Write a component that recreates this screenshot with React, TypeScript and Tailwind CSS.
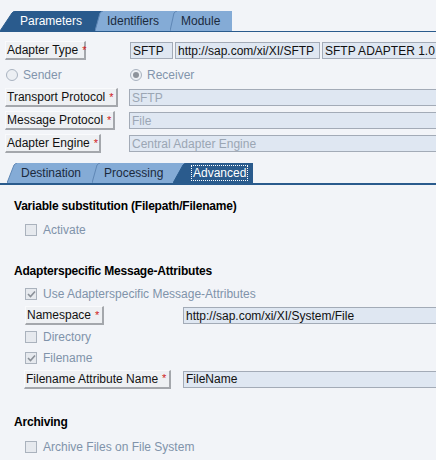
import React from "react";

const DARK = "#2a5b8d";
const LIGHT = "#84abd6";
const PAGE = "#f2f4f8";

interface TabDef {
  label: string;
  slant: number;
  width: number;
  selected?: boolean;
  overlap?: number;
}

function Slant({ w, h, fill, prev, edge }: { w: number; h: number; fill: string; prev: string; edge: string }) {
  return (
    <svg width={w} height={h} viewBox={`0 0 ${w} ${h}`} className="block shrink-0">
      <rect x="0" y="0" width={w} height={h} fill={prev} />
      <path d={`M0 ${h} L${w - 3} 2 Q${w - 1} 0 ${w} 0 L${w} ${h} Z`} fill={fill} />
      <path d={`M0 ${h} L${w - 3} 2 Q${w - 1} 0 ${w} 0`} fill="none" stroke={edge} strokeWidth="1" />
    </svg>
  );
}

function TabStrip({ tabs, lead = 0 }: { tabs: TabDef[]; lead?: number }) {
  return (
    <div>
      <div className="flex h-[20px] items-stretch" style={{ paddingLeft: lead }}>
        {tabs.map((t, i) => {
          const fill = t.selected ? DARK : LIGHT;
          const prevTab = tabs[i - 1];
          const prev = i === 0 ? PAGE : prevTab.selected ? DARK : LIGHT;
          return (
            <div
              key={t.label}
              className="flex items-stretch"
              style={{ marginLeft: t.overlap ? -t.overlap : 0 }}
            >
              <Slant w={t.slant} h={20} fill={fill} prev={prev} edge={t.selected ? DARK : "#5f87b5"} />
              <div
                className={
                  t.selected
                    ? "flex items-center pl-[5px] text-white bg-[#2a5b8d]"
                    : "flex items-center pl-[4px] text-[#1b2a3d] bg-[#84abd6]"
                }
                style={{ width: t.width }}
              >
                {t.selected && t.label === "Advanced" ? (
                  <span className="border border-dotted border-white px-[1px] leading-[14px]">{t.label}</span>
                ) : (
                  <span>{t.label}</span>
                )}
              </div>
            </div>
          );
        })}
      </div>
      <div className="h-[1px] bg-[#2a5b8d]" />
    </div>
  );
}

function Label({ text, width }: { text: string; width: number }) {
  return (
    <div
      className="flex h-[19px] shrink-0 items-center whitespace-nowrap border-t border-l border-[#f9fafc] border-r-2 border-b-2 border-r-[#a4a7ac] border-b-[#a4a7ac] bg-[#eef0f3] pl-[1px] text-[#111]"
      style={{ width }}
    >
      {text}
      <span className="ml-[4px] text-[11px] text-[#d01818]">*</span>
    </div>
  );
}

function Field({ value, disabled, width }: { value: string; disabled?: boolean; width?: number }) {
  return (
    <div
      className={
        "flex h-[17px] items-center whitespace-nowrap border border-[#a3abb7] bg-[#dfe7f2] pl-[2px] " +
        (disabled ? "text-[#9ba6b4]" : "text-[#111]") +
        (width ? " shrink-0" : " flex-1")
      }
      style={width ? { width } : undefined}
    >
      {value}
    </div>
  );
}

function Radio({ checked, label }: { checked?: boolean; label: string }) {
  return (
    <div className="flex items-center gap-[5px] text-[#8295ac]">
      <span className="flex h-[12px] w-[12px] items-center justify-center rounded-full border border-[#a9b3c0] bg-[#eceff3]">
        {checked && <span className="h-[6px] w-[6px] rounded-full bg-[#8d939b]" />}
      </span>
      {label}
    </div>
  );
}

function Check({ checked, label }: { checked?: boolean; label: string }) {
  return (
    <div className="flex h-[20px] items-center gap-[6px] pl-[25px] text-[#8093aa]">
      <span className="flex h-[12px] w-[12px] items-center justify-center border border-[#aab2bd] bg-[#e6e9ee]">
        {checked && (
          <svg width="9" height="8" viewBox="0 0 9 8">
            <path d="M1 4 L3.5 6.5 L8 1.5" fill="none" stroke="#8a9098" strokeWidth="1.6" />
          </svg>
        )}
      </span>
      {label}
    </div>
  );
}

function Heading({ text }: { text: string }) {
  return <div className="h-[16px] pl-[14px] font-bold leading-[16px] text-black tracking-[-0.2px]">{text}</div>;
}

export default function App() {
  return (
    <div
      className="h-[460px] w-[436px] overflow-hidden bg-[#f2f4f8] text-[12px]"
      style={{ fontFamily: '"Liberation Sans", Arial, sans-serif' }}
    >
      <div className="w-[460px]">
        <div className="pt-[11px]">
          <TabStrip
            tabs={[
              { label: "Parameters", slant: 15, width: 80, selected: true },
              { label: "Identifiers", slant: 8, width: 67 },
              { label: "Module", slant: 7, width: 55 },
            ]}
          />
        </div>

        <div className="mt-[7px] pl-[5px]">
          <div className="flex h-[23px] items-center">
            <Label text="Adapter Type" width={81} />
            <div className="ml-[44px] flex gap-[2px]">
              <Field value="SFTP" width={43} />
              <Field value="http://sap.com/xi/XI/SFTP" width={145} />
              <Field value="SFTP ADAPTER 1.0" width={140} />
            </div>
          </div>
          <div className="flex h-[24px] items-center pt-[2px]">
            <div className="w-[125px] pl-[1px]">
              <Radio label="Sender" />
            </div>
            <Radio checked label="Receiver" />
          </div>
          <div className="flex h-[23px] items-center">
            <Label text="Transport Protocol" width={113} />
            <div className="ml-[11px] flex flex-1">
              <Field value="SFTP" disabled />
            </div>
          </div>
          <div className="flex h-[23px] items-center">
            <Label text="Message Protocol" width={110} />
            <div className="ml-[14px] flex flex-1">
              <Field value="File" disabled />
            </div>
          </div>
          <div className="flex h-[23px] items-center">
            <Label text="Adapter Engine" width={96} />
            <div className="ml-[28px] flex flex-1">
              <Field value="Central Adapter Engine" disabled />
            </div>
          </div>
        </div>

        <div className="mt-[8px]">
          <TabStrip
            lead={7}
            tabs={[
              { label: "Destination", slant: 10, width: 75 },
              { label: "Processing", slant: 8, width: 75 },
              { label: "Advanced", slant: 13, width: 67, selected: true, overlap: 2 },
            ]}
          />
          <div className="h-[1px] bg-[#2a5b8d]" />
        </div>

        <div className="mt-[13px]">
          <Heading text="Variable substitution (Filepath/Filename)" />
          <div className="mt-[6px]">
            <Check label="Activate" />
          </div>

          <div className="mt-[23px]">
            <Heading text="Adapterspecific Message-Attributes" />
          </div>
          <div className="mt-[5px]">
            <Check checked label="Use Adapterspecific Message-Attributes" />
            <div className="flex h-[23px] items-center pl-[25px]">
              <Label text="Namespace" width={79} />
              <div className="ml-[79px] flex flex-1">
                <Field value="http://sap.com/xi/XI/System/File" />
              </div>
            </div>
            <Check label="Directory" />
            <div className="h-[1px]" />
            <Check checked label="Filename" />
            <div className="flex h-[22px] items-center pl-[24px]">
              <Label text="Filename Attribute Name" width={147} />
              <div className="ml-[12px] flex flex-1">
                <Field value="FileName" />
              </div>
            </div>
          </div>

          <div className="mt-[24px]">
            <Heading text="Archiving" />
          </div>
          <div className="mt-[7px]">
            <Check label="Archive Files on File System" />
          </div>
        </div>
      </div>
    </div>
  );
}
